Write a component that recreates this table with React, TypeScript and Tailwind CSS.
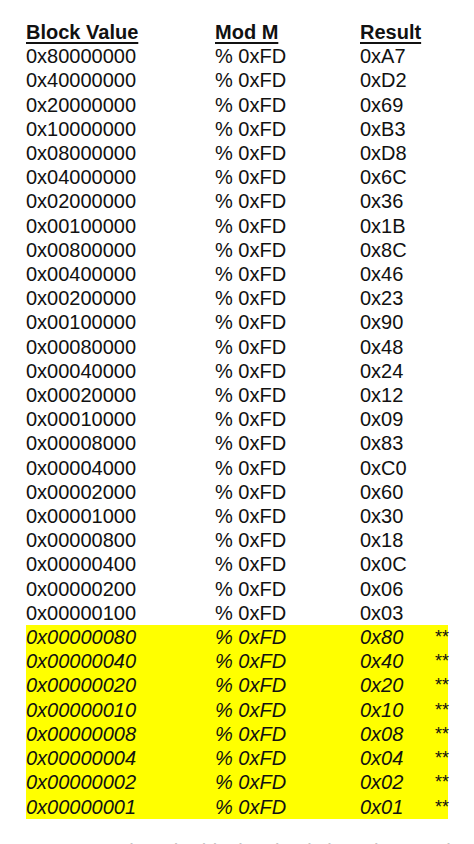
const rows: [string, string][] = [
  ['0x80000000', '0xA7'],
  ['0x40000000', '0xD2'],
  ['0x20000000', '0x69'],
  ['0x10000000', '0xB3'],
  ['0x08000000', '0xD8'],
  ['0x04000000', '0x6C'],
  ['0x02000000', '0x36'],
  ['0x00100000', '0x1B'],
  ['0x00800000', '0x8C'],
  ['0x00400000', '0x46'],
  ['0x00200000', '0x23'],
  ['0x00100000', '0x90'],
  ['0x00080000', '0x48'],
  ['0x00040000', '0x24'],
  ['0x00020000', '0x12'],
  ['0x00010000', '0x09'],
  ['0x00008000', '0x83'],
  ['0x00004000', '0xC0'],
  ['0x00002000', '0x60'],
  ['0x00001000', '0x30'],
  ['0x00000800', '0x18'],
  ['0x00000400', '0x0C'],
  ['0x00000200', '0x06'],
  ['0x00000100', '0x03'],
];

const marked: [string, string][] = [
  ['0x00000080', '0x80'],
  ['0x00000040', '0x40'],
  ['0x00000020', '0x20'],
  ['0x00000010', '0x10'],
  ['0x00000008', '0x08'],
  ['0x00000004', '0x04'],
  ['0x00000002', '0x02'],
  ['0x00000001', '0x01'],
];

const grid = 'grid grid-cols-[189px_145px_75px_13px]';

export default function App() {
  return (
    <div
      className="h-[844px] overflow-hidden bg-white pl-[26px] pt-[20px] text-[20px] leading-[24.2px] text-[#111]"
      style={{ fontFamily: '"Liberation Sans", Arial, sans-serif' }}
    >
      {/* Header */}
      <div className={`${grid} w-[422px] font-bold`}>
        <span className="underline decoration-2 underline-offset-[3px]">Block Value</span>
        <span className="underline decoration-2 underline-offset-[3px]">Mod M</span>
        <span className="underline decoration-2 underline-offset-[3px]">Result</span>
        <span />
      </div>

      {/* Plain rows */}
      {rows.map(([v, r], i) => (
        <div key={i} className={`${grid} w-[422px]`}>
          <span>{v}</span>
          <span>% 0xFD</span>
          <span>{r}</span>
          <span />
        </div>
      ))}

      {/* Highlighted rows */}
      <div className="w-[422px] bg-[#ffff00]">
        {marked.map(([v, r], i) => (
          <div key={i} className={`${grid} italic`}>
            <span>{v}</span>
            <span>% 0xFD</span>
            <span>{r}</span>
            <span className="pt-[3px] text-[18px] leading-[18px] not-italic">**</span>
          </div>
        ))}
      </div>

      {/* Following paragraph, cut off by the page edge */}
      <p className="mt-[20px] whitespace-nowrap text-[#c4c4c4]">
        However, when the block value is less than M, the
      </p>
    </div>
  );
}
